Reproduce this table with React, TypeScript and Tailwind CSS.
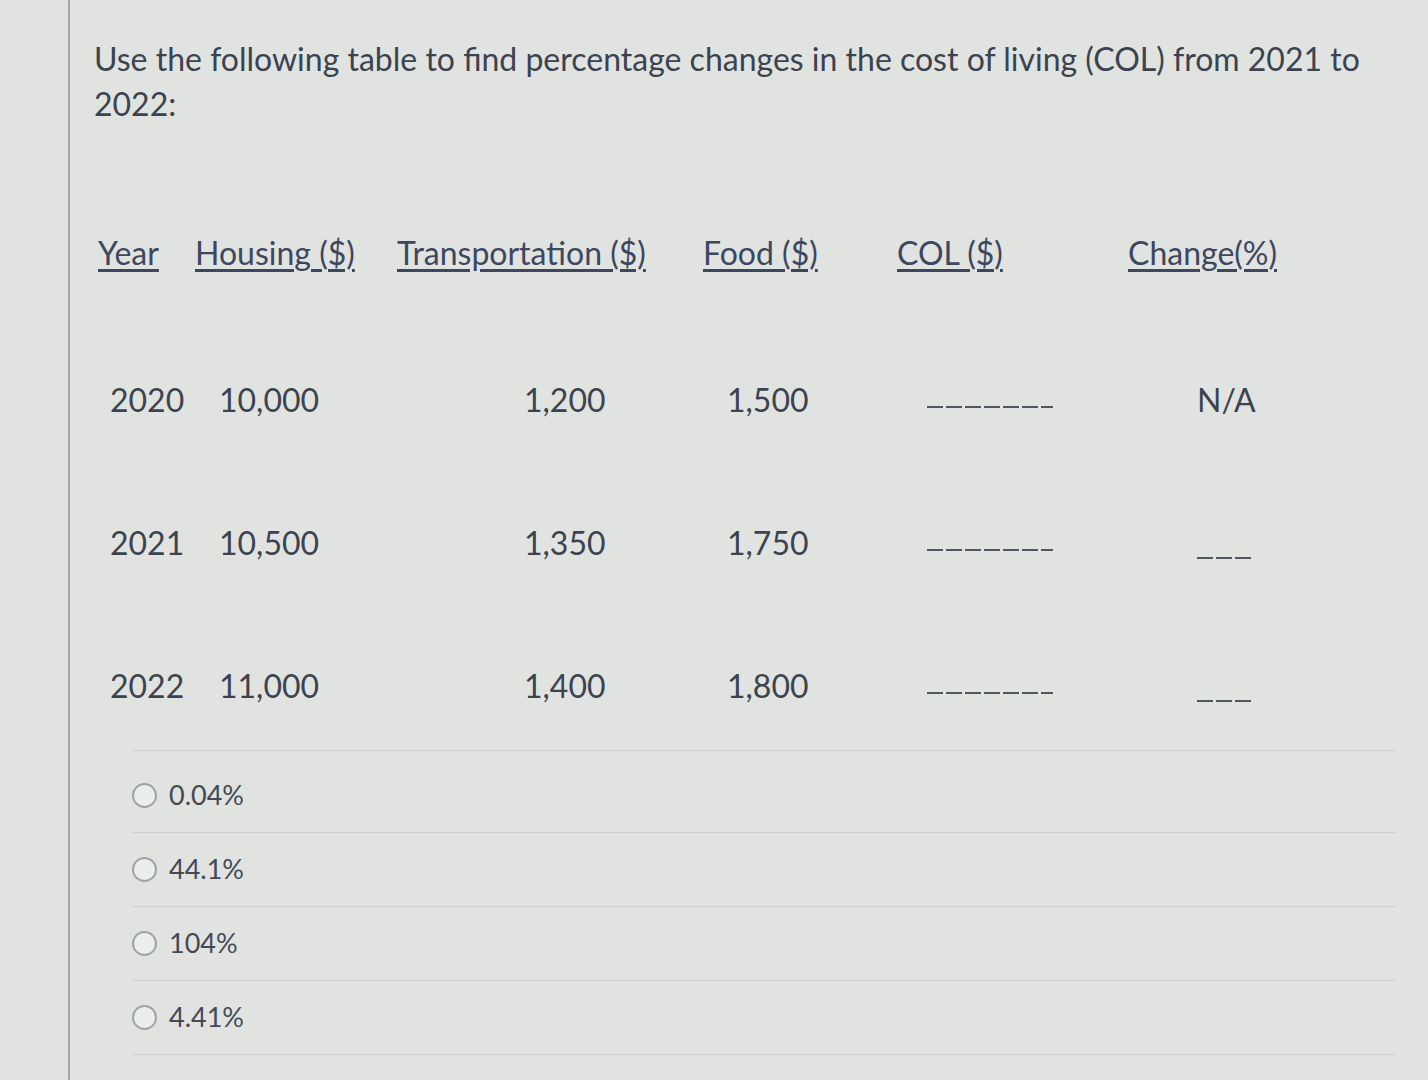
import { Fragment } from 'react'

const rows = [
  { year: '2020', housing: '10,000', trans: '1,200', food: '1,500', change: 'N/A' },
  { year: '2021', housing: '10,500', trans: '1,350', food: '1,750', change: '' },
  { year: '2022', housing: '11,000', trans: '1,400', food: '1,800', change: '' },
]

const options = ['0.04%', '44.1%', '104%', '4.41%']

function Blank({ w }: { w: string }) {
  return (
    <span
      className={`inline-block h-[2px] ${w} bg-[repeating-linear-gradient(90deg,#50565e_0_16px,transparent_16px_19px)]`}
    />
  )
}

export default function App() {
  return (
    <div
      className="min-h-[1080px] w-[1428px] overflow-hidden bg-[#e1e3e1] text-[#3c4350]"
      style={{ fontFamily: 'Lato, "Open Sans", sans-serif' }}
    >
      <div className="ml-[68px] min-h-[1080px] border-l-2 border-[#a3a7aa] pl-[24px] pt-[36px]">
        <p className="w-[1275px] text-[32px] leading-[45px]">
          Use the following table to find percentage changes in the cost of living (COL) from 2021 to 2022:
        </p>

        {/* table */}
        <div className="mt-[107px] text-[32px] text-[#3e4760]">
          <div className="flex h-[40px] items-center">
            <div className="w-[101px] pl-[4px]"><span className="underline underline-offset-4">Year</span></div>
            <div className="w-[202px]"><span className="underline underline-offset-4">Housing ($)</span></div>
            <div className="w-[306px]"><span className="underline underline-offset-4">Transportation ($)</span></div>
            <div className="w-[194px]"><span className="underline underline-offset-4">Food ($)</span></div>
            <div className="w-[231px]"><span className="underline underline-offset-4">COL ($)</span></div>
            <div><span className="underline underline-offset-4">Change(%)</span></div>
          </div>

          {rows.map((r, i) => (
            <Fragment key={r.year}>
              <div className={`${i === 0 ? 'mt-[107px]' : 'mt-[103px]'} flex h-[40px] items-center text-[#3c4350]`}>
                <div className="w-[116px] pl-[16px]">{r.year}</div>
                <div className="w-[305px] pl-[9px]">{r.housing}</div>
                <div className="w-[201px] pl-[9px]">{r.trans}</div>
                <div className="w-[200px] pl-[11px]">{r.food}</div>
                <div className="flex w-[270px] items-center pl-[11px] pt-[14px]">
                  <Blank w="w-[126px]" />
                </div>
                <div className="flex items-center pl-[11px]">
                  {i === 0 ? <span>{r.change}</span> : <span className="pt-[8px]"><Blank w="w-[54px]" /></span>}
                </div>
              </div>
            </Fragment>
          ))}
        </div>

        {/* answer options */}
        <div className="mt-[44px] mr-[32px] ml-[38px] border-t border-[#cdd0d0] pt-[8px] text-[27px] text-[#444a55]">
          {options.map((o) => (
            <div key={o} className="flex h-[74px] items-center gap-[12px] border-b border-[#cdd0d0]">
              <span className="inline-block h-[25px] w-[25px] rounded-full border-2 border-[#9ea3a8] bg-[#eceeec]" />
              <span>{o}</span>
            </div>
          ))}
        </div>
      </div>
    </div>
  )
}
